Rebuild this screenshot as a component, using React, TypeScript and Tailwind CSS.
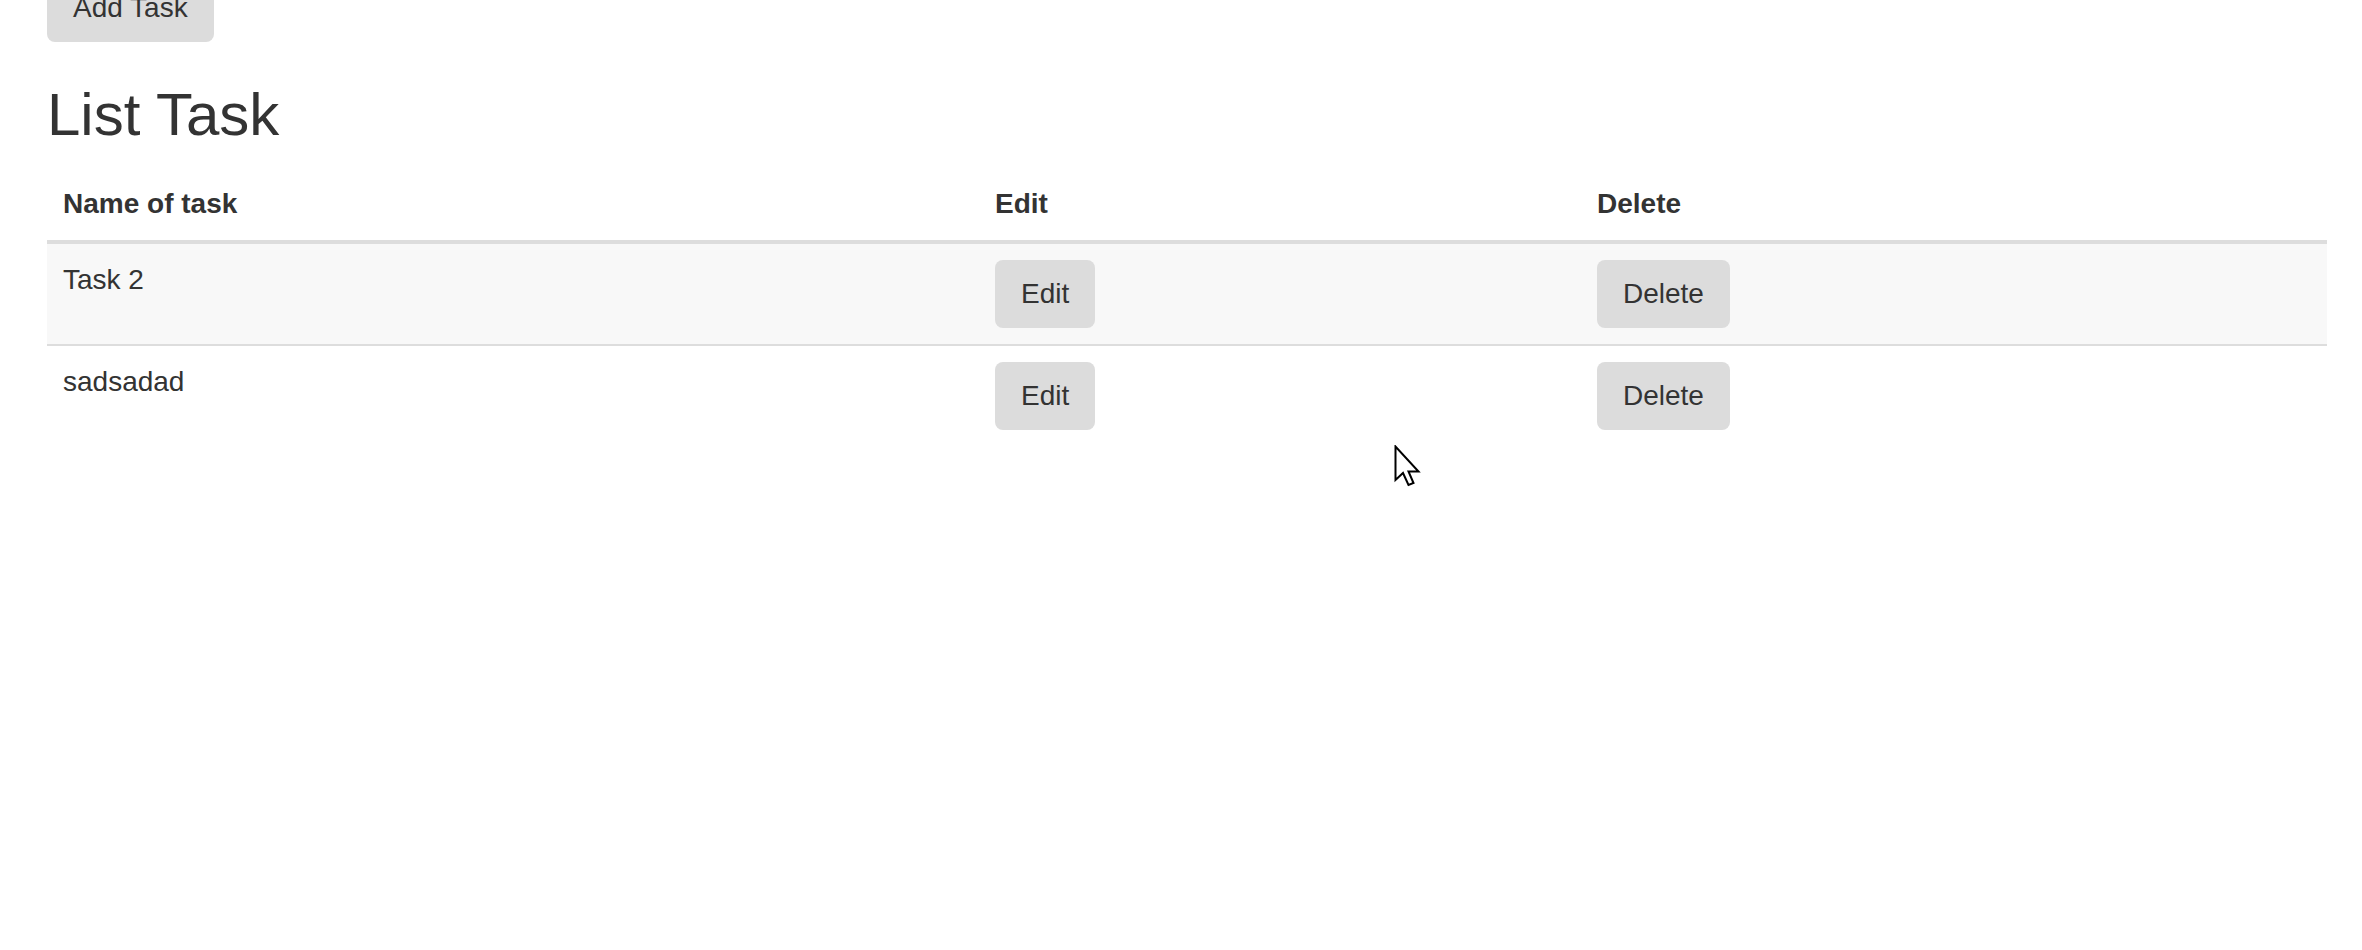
import React from 'react'

interface Task {
  id: number
  name: string
}

const tasks: Task[] = [
  { id: 2, name: 'Task 2' },
  { id: 3, name: 'sadsadad' },
]

function GrayButton({ children }: { children: React.ReactNode }) {
  return (
    <button className="h-[68px] px-[24px] border-2 border-transparent rounded-[8px] bg-[#dcdcdc] text-[28px] leading-[40px] text-[#333]">
      {children}
    </button>
  )
}

export default function App() {
  return (
    <div className="relative min-h-screen overflow-hidden bg-white pl-[47px] pr-[35px] font-['Liberation_Sans',Arial,sans-serif] text-[28px] leading-[40px] text-[#333]">
      {/* page is scrolled a bit: top of the button is out of view */}
      <div className="-mt-[26px]">
        <GrayButton>Add Task</GrayButton>
      </div>

      <h2 className="mt-[40px] mb-[20px] text-[60px] leading-[66px] font-normal">List Task</h2>

      <table className="w-[2280px]">
        <thead>
          <tr>
            <th className="w-[932px] p-[16px] text-left font-bold border-b-4 border-[#ddd]">Name of task</th>
            <th className="w-[602px] p-[16px] text-left font-bold border-b-4 border-[#ddd]">Edit</th>
            <th className="p-[16px] text-left font-bold border-b-4 border-[#ddd]">Delete</th>
          </tr>
        </thead>
        <tbody>
          {tasks.map((t, i) => (
            <tr key={t.id} className={i % 2 === 0 ? 'bg-[#f8f8f8]' : 'bg-white'}>
              <td className={`p-[16px] align-top ${i > 0 ? 'border-t-2 border-[#ddd]' : ''}`}>{t.name}</td>
              <td className={`p-[16px] align-top ${i > 0 ? 'border-t-2 border-[#ddd]' : ''}`}>
                <GrayButton>Edit</GrayButton>
              </td>
              <td className={`p-[16px] align-top ${i > 0 ? 'border-t-2 border-[#ddd]' : ''}`}>
                <GrayButton>Delete</GrayButton>
              </td>
            </tr>
          ))}
        </tbody>
      </table>

      {/* mouse pointer */}
      <svg className="absolute left-[1394px] top-[445px]" width="28" height="42" viewBox="0 0 28 42">
        <path d="M1.5 1.5 L1.5 35 L9 28 L14.5 40 L19.5 38 L14.5 26.5 L24.5 26.5 Z" fill="#fff" stroke="#000" strokeWidth="2" strokeLinejoin="miter" />
      </svg>
    </div>
  )
}
